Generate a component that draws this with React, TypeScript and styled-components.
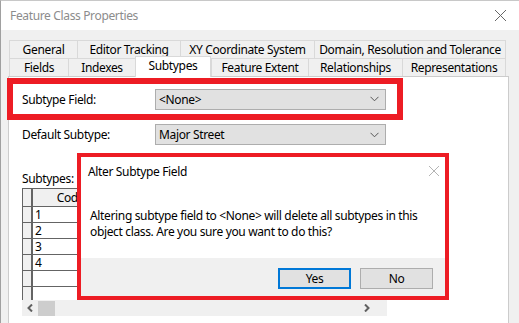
import React from 'react';
import styled, { createGlobalStyle } from 'styled-components';

const Global = createGlobalStyle`
  html, body { margin: 0; padding: 0; background: #ffffff; }
  * { box-sizing: border-box; }
`;

const FONT = `"Noto Sans", "Open Sans", sans-serif`;

const Window = styled.div`
  position: relative;
  width: 519px;
  height: 323px;
  overflow: hidden;
  background: #f0f0f0;
  border-left: 1px solid #a0a0a0;
  border-top: 1px solid #c8c8c8;
  font-family: ${FONT};
  font-size: 12px;
  letter-spacing: -0.35px;
  color: #000;
`;

const TitleBar = styled.div`
  height: 29px;
  background: #ffffff;
  display: flex;
  align-items: center;
  justify-content: space-between;
  padding: 0 13px 1px 9px;
  color: #8c8c8c;
`;

const Body = styled.div`
  padding: 10px 0 0 7px;
`;

const TabRow = styled.div`
  display: flex;
  height: 18px;
  margin-left: 1px;
`;

const Tab = styled.div<{ $w: number; $active?: boolean; $last?: boolean }>`
  width: ${p => p.$w}px;
  height: ${p => (p.$active ? 21 : 18)}px;
  margin-top: ${p => (p.$active ? -2 : 0)}px;
  margin-bottom: ${p => (p.$active ? -1 : 0)}px;
  padding-bottom: ${p => (p.$active ? 3 : 0)}px;
  position: relative;
  z-index: ${p => (p.$active ? 2 : 1)};
  background: ${p => (p.$active ? '#ffffff' : '#f0f0f0')};
  border-top: 1px solid #d9d9d9;
  border-left: 1px solid #d9d9d9;
  border-right: ${p => (p.$last || p.$active ? '1px solid #d9d9d9' : 'none')};
  display: flex;
  align-items: center;
  justify-content: center;
  white-space: nowrap;
  flex: none;
`;

const Panel = styled.div`
  position: relative;
  width: 501px;
  height: 260px;
  background: #ffffff;
  border: 1px solid #cccccc;
  padding: 1px 0 0 13px;
`;

const HighlightRow = styled.div`
  margin-left: -15px;
  width: 396px;
  height: 42px;
  border: 6px solid #ed1c24;
  display: flex;
  align-items: center;
  padding: 0 0 0 9px;
`;

const FieldRow = styled.div<{ $mt: number }>`
  display: flex;
  align-items: center;
  margin-top: ${p => p.$mt}px;
  height: 21px;
`;

const Label = styled.div`
  width: 133px;
  flex: none;
`;

const Combo = styled.div`
  width: 231px;
  height: 21px;
  background: #e1e1e1;
  border: 1px solid #adadad;
  display: flex;
  align-items: center;
  justify-content: space-between;
  padding: 0 6px 0 3px;
`;

const SectionLabel = styled.div`
  margin-top: 24px;
  height: 19px;
  line-height: 19px;
`;

const Grid = styled.div`
  width: 365px;
  display: grid;
  grid-template-columns: 10px 76px 110px 1fr;
  grid-template-rows: 18px;
  grid-auto-rows: 16px;
  border-left: 1px solid #646464;
  border-top: 1px solid #646464;
  height: 112px;
  overflow: hidden;
`;

const HeadCell = styled.div<{ $corner?: boolean }>`
  background: #f0f0f0;
  border-right: ${p => (p.$corner ? '2px solid #646464' : '1px solid #a0a0a0')};
  border-bottom: 1px solid #646464;
  display: flex;
  align-items: center;
  justify-content: center;
`;

const RowHead = styled.div`
  background: #f0f0f0;
  border-right: 2px solid #646464;
  border-bottom: 1px solid #646464;
`;

const Cell = styled.div`
  background: #ffffff;
  color: #000000;
  border-right: 1px solid #a0a0a0;
  border-bottom: 1px solid #646464;
  padding-left: 2px;
  display: flex;
  align-items: center;
  line-height: 15px;
`;

const ScrollBar = styled.div`
  width: 365px;
  height: 16px;
  background: #f0f0f0;
  display: flex;
  align-items: center;
  padding: 0 17px 0 5px;
`;

const Thumb = styled.div`
  width: 17px;
  height: 15px;
  background: #cdcdcd;
  margin-left: 5px;
  margin-right: auto;
`;

const Dialog = styled.div`
  position: absolute;
  left: 76px;
  top: 152px;
  width: 372px;
  height: 147px;
  border: 4px solid #ed1c24;
  background: #ffffff;
  display: flex;
  flex-direction: column;
  z-index: 5;
`;

const DialogTitle = styled.div`
  height: 29px;
  display: flex;
  align-items: center;
  justify-content: space-between;
  padding: 0 6px 1px 7px;
`;

const Message = styled.div`
  flex: 1;
  padding: 22px 0 0 9px;
  line-height: 16px;
`;

const ButtonBar = styled.div`
  height: 38px;
  background: #f0f0f0;
  display: flex;
  justify-content: flex-end;
  gap: 9px;
  padding: 10px 12px 0 0;
`;

const Button = styled.div<{ $default?: boolean }>`
  width: 73px;
  height: 21px;
  background: #e1e1e1;
  border: ${p => (p.$default ? '2px solid #0078d7' : '1px solid #adadad')};
  display: flex;
  align-items: center;
  justify-content: center;
`;

const Chevron = () => (
  <svg width="9" height="6" viewBox="0 0 9 6">
    <polyline points="0.5,0.8 4.5,4.8 8.5,0.8" fill="none" stroke="#555" strokeWidth="1" />
  </svg>
);

const CloseX = ({ color, size }: { color: string; size: number }) => (
  <svg width={size} height={size} viewBox={`0 0 ${size} ${size}`}>
    <line x1="0" y1="0" x2={size} y2={size} stroke={color} strokeWidth="1" />
    <line x1={size} y1="0" x2="0" y2={size} stroke={color} strokeWidth="1" />
  </svg>
);

const Arrow = ({ dir }: { dir: 'l' | 'r' }) => (
  <svg width="6" height="8" viewBox="0 0 6 8">
    <polyline
      points={dir === 'l' ? '5,0.5 1.5,4 5,7.5' : '1,0.5 4.5,4 1,7.5'}
      fill="none"
      stroke="#606060"
      strokeWidth="2"
    />
  </svg>
);

const row1 = [
  { t: 'General', w: 68 },
  { t: 'Editor Tracking', w: 103 },
  { t: 'XY Coordinate System', w: 134 },
  { t: 'Domain, Resolution and Tolerance', w: 192 },
];
const row2 = [
  { t: 'Fields', w: 59 },
  { t: 'Indexes', w: 67 },
  { t: 'Subtypes', w: 76, active: true },
  { t: 'Feature Extent', w: 97 },
  { t: 'Relationships', w: 94 },
  { t: 'Representations', w: 104 },
];

const rows = ['1', '2', '3', '4', '', ''];

export default function App() {
  return (
    <>
      <Global />
      <Window>
        <TitleBar>
          <span>Feature Class Properties</span>
          <CloseX color="#666" size={11} />
        </TitleBar>
        <Body>
          <TabRow>
            {row1.map((t, i) => (
              <Tab key={t.t} $w={t.w} $last={i === row1.length - 1}>{t.t}</Tab>
            ))}
          </TabRow>
          <TabRow>
            {row2.map((t, i) => (
              <Tab key={t.t} $w={t.w} $active={t.active} $last={i === row2.length - 1}>{t.t}</Tab>
            ))}
          </TabRow>
          <Panel>
            <HighlightRow>
              <Label>Subtype Field:</Label>
              <Combo>
                <span>&lt;None&gt;</span>
                <Chevron />
              </Combo>
            </HighlightRow>
            <FieldRow $mt={4}>
              <Label>Default Subtype:</Label>
              <Combo>
                <span>Major Street</span>
                <Chevron />
              </Combo>
            </FieldRow>
            <SectionLabel>Subtypes:</SectionLabel>
            <Grid>
              <HeadCell $corner />
              <HeadCell>Code</HeadCell>
              <HeadCell>Description</HeadCell>
              <HeadCell />
              {rows.map((r, i) => (
                <React.Fragment key={i}>
                  <RowHead />
                  <Cell>{r}</Cell>
                  <Cell />
                  <Cell />
                </React.Fragment>
              ))}
            </Grid>
            <ScrollBar>
              <Arrow dir="l" />
              <Thumb />
              <Arrow dir="r" />
            </ScrollBar>
          </Panel>
        </Body>
        <Dialog>
          <DialogTitle>
            <span>Alter Subtype Field</span>
            <CloseX color="#b4b4b4" size={10} />
          </DialogTitle>
          <Message>
            Altering subtype field to &lt;None&gt; will delete all subtypes in this
            <br />
            object class. Are you sure you want to do this?
          </Message>
          <ButtonBar>
            <Button $default>Yes</Button>
            <Button>No</Button>
          </ButtonBar>
        </Dialog>
      </Window>
    </>
  );
}
